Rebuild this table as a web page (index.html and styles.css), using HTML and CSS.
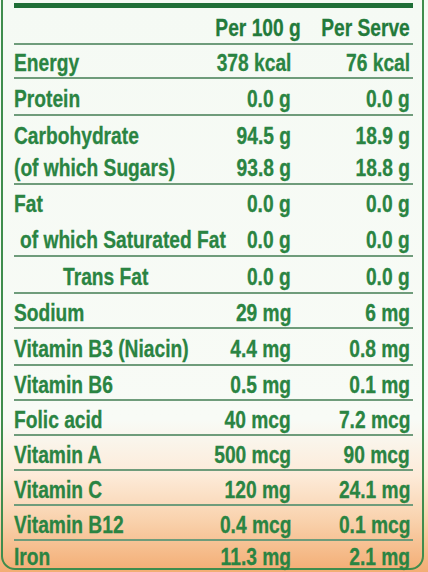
FILE: index.html
```html
<!DOCTYPE html>
<html>
<head>
<meta charset="utf-8">
<link rel="stylesheet" href="styles.css">
</head>
<body>
<div class="frame">
  <div class="rule"></div>
  <div class="row head h35"><span></span><span class="v hv1"><b>Per 100 g</b></span><span class="v"><b>Per Serve</b></span></div>
  <div class="row h32"><span class="l"><b>Energy</b></span><span class="v"><b>378 kcal</b></span><span class="v"><b>76 kcal</b></span></div>
  <div class="row h35"><span class="l"><b>Protein</b></span><span class="v"><b>0.0 g</b></span><span class="v"><b>0.0 g</b></span></div>
  <div class="row double carb"><span class="l"><b>Carbohydrate</b></span><span class="v"><b>94.5 g</b></span><span class="v"><b>18.9 g</b></span><span class="l"><b>(of which Sugars)</b></span><span class="v"><b>93.8 g</b></span><span class="v"><b>18.8 g</b></span></div>
  <div class="row double fat"><span class="l"><b>Fat</b></span><span class="v"><b>0.0 g</b></span><span class="v"><b>0.0 g</b></span><span class="l sat"><b>of which Saturated Fat</b></span><span class="v"><b>0.0 g</b></span><span class="v"><b>0.0 g</b></span></div>
  <div class="row h35"><span class="l trans"><b>Trans Fat</b></span><span class="v"><b>0.0 g</b></span><span class="v"><b>0.0 g</b></span></div>
  <div class="row h33"><span class="l"><b>Sodium</b></span><span class="v"><b>29 mg</b></span><span class="v"><b>6 mg</b></span></div>
  <div class="row h35"><span class="l"><b>Vitamin B3 (Niacin)</b></span><span class="v"><b>4.4 mg</b></span><span class="v"><b>0.8 mg</b></span></div>
  <div class="row h33"><span class="l"><b>Vitamin B6</b></span><span class="v"><b>0.5 mg</b></span><span class="v"><b>0.1 mg</b></span></div>
  <div class="row h33"><span class="l"><b>Folic acid</b></span><span class="v"><b>40 mcg</b></span><span class="v"><b>7.2 mcg</b></span></div>
  <div class="row h33"><span class="l"><b>Vitamin A</b></span><span class="v"><b>500 mcg</b></span><span class="v"><b>90 mcg</b></span></div>
  <div class="row h33"><span class="l"><b>Vitamin C</b></span><span class="v"><b>120 mg</b></span><span class="v"><b>24.1 mg</b></span></div>
  <div class="row h33"><span class="l"><b>Vitamin B12</b></span><span class="v"><b>0.4 mcg</b></span><span class="v"><b>0.1 mcg</b></span></div>
  <div class="row last"><span class="l"><b>Iron</b></span><span class="v"><b>11.3 mg</b></span><span class="v"><b>2.1 mg</b></span></div>
</div>
</body>
</html>
```
FILE: styles.css
```css
html, body {
  margin: 0;
  padding: 0;
  height: 572px;
  overflow: hidden;
}
body {
  background: linear-gradient(to bottom, #f5faf4 0, #f8fbf6 420px, #fdebd9 475px, #f9d2ad 520px, #f3ad74 572px);
  font-family: "Liberation Sans", Arial, sans-serif;
  font-weight: bold;
  font-size: 24px;
  color: #2a8442;
}
.frame {
  box-sizing: border-box;
  margin: -20px 0 0 1px;
  width: 423px;
  height: 590px;
  border: 2px solid #3f8d4d;
  border-radius: 0 0 14px 14px;
  padding: 21px 9px 0 11px;
}
.rule {
  height: 5px;
  background: #1f6f37;
}
.row {
  box-sizing: border-box;
  display: grid;
  grid-template-columns: minmax(0, 1fr) 120px 119px;
  align-items: center;
  border-bottom: 2px solid #6f9c7b;
  line-height: 24px;
  padding-top: 4px;
}
.row > span { white-space: nowrap; }
.row b {
  display: inline-block;
  font-weight: bold;
  transform: scaleX(0.8);
  -webkit-text-stroke: 0.3px currentColor;
}
.l b { transform-origin: left center; }
.v {
  text-align: right;
  padding-right: 3px;
}
.v b { transform-origin: right center; }
.head { color: #237a3b; }
.hv1 { margin-right: -10px; }
.h32 { height: 34px; }
.h33 { height: 35px; }
.h35 { height: 37px; }
.double { row-gap: 8px; align-content: center; }
.carb { height: 69px; }
.fat { height: 72px; row-gap: 12px; }
.sat { padding-left: 6px; }
.trans { padding-left: 49px; }
.last { height: 27px; border-bottom: none; }
```
